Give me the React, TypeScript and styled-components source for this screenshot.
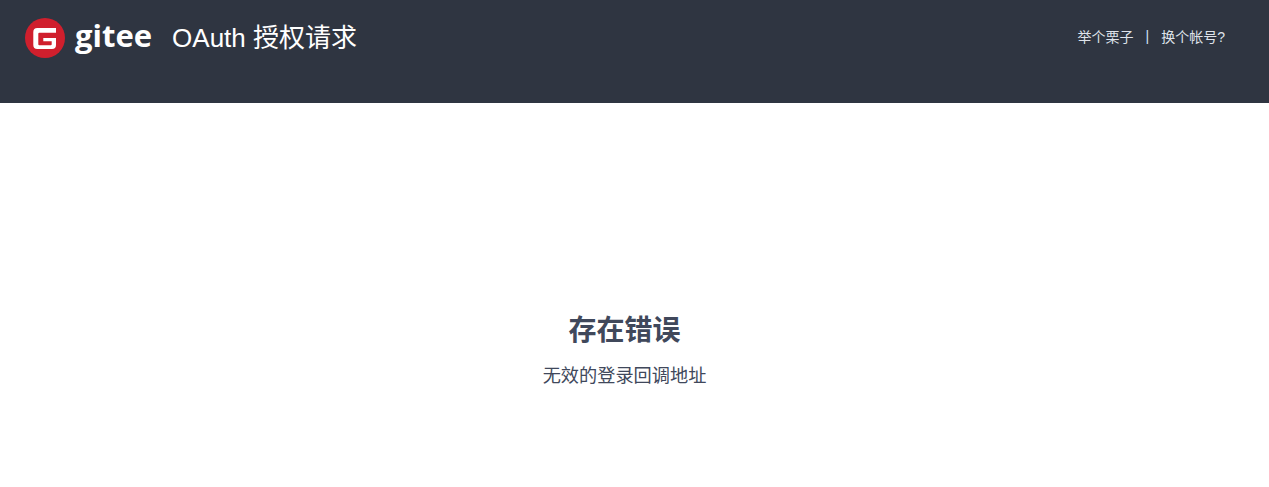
import styled, { createGlobalStyle } from 'styled-components';

const GlobalStyle = createGlobalStyle`
  html, body {
    margin: 0;
    padding: 0;
    background: #fff;
    font-family: "Liberation Sans", "Noto Sans CJK SC", sans-serif;
  }
`;

const Header = styled.header`
  height: 103px;
  box-sizing: border-box;
  padding: 18px 44px 0 25px;
  background: #2f3541;
  display: flex;
  justify-content: space-between;
  align-items: flex-start;
`;

const Brand = styled.div`
  display: flex;
  align-items: center;
  height: 40px;
`;

const LogoText = styled.span`
  margin: -6px 0 0 10px;
  font-family: "Open Sans", sans-serif;
  font-size: 31px;
  font-weight: 700;
  color: #fff;
  line-height: 36px;
`;

const Title = styled.h1`
  margin: 0 0 0 20px;
  font-size: 26px;
  font-weight: 400;
  color: #fff;
  line-height: 40px;
`;

const Links = styled.nav`
  display: flex;
  align-items: center;
  height: 36px;
  font-size: 14px;
  color: #dfe3ea;
`;

const Link = styled.a`
  color: inherit;
  text-decoration: none;
`;

const Divider = styled.span`
  margin: 0 12px;
  color: #cfe0f5;
`;

const Main = styled.main`
  padding: 209px 20px 0 0;
  text-align: center;
  color: #40485b;
`;

const ErrorTitle = styled.h2`
  margin: 0;
  font-size: 28px;
  font-weight: 700;
  line-height: 38px;
`;

const ErrorText = styled.p`
  margin: 13px 0 0;
  font-size: 18.2px;
  line-height: 26px;
`;

const Logo = () => (
  <svg width="40" height="40" viewBox="0 0 40 40">
    <circle cx="20" cy="20" r="20" fill="#d01f2d" />
    <path
      d="M8.300 14a4 4 0 0 1 4-4H31v4.700H14.300a1 1 0 0 0-1 1V26.300a1 1 0 0 0 1 1H25.700a1 1 0 0 0 1-1V23.300H18.300V20H31V27a4 4 0 0 1-4 4H12.300a4 4 0 0 1-4-4Z"
      fill="#fff"
    />
  </svg>
);

export default function App() {
  return (
    <>
      <GlobalStyle />
      <Header>
        <Brand>
          <Logo />
          <LogoText>gitee</LogoText>
          <Title>OAuth 授权请求</Title>
        </Brand>
        <Links>
          <Link href="#">举个栗子</Link>
          <Divider>|</Divider>
          <Link href="#">换个帐号?</Link>
        </Links>
      </Header>
      <Main>
        <ErrorTitle>存在错误</ErrorTitle>
        <ErrorText>无效的登录回调地址</ErrorText>
      </Main>
    </>
  );
}
